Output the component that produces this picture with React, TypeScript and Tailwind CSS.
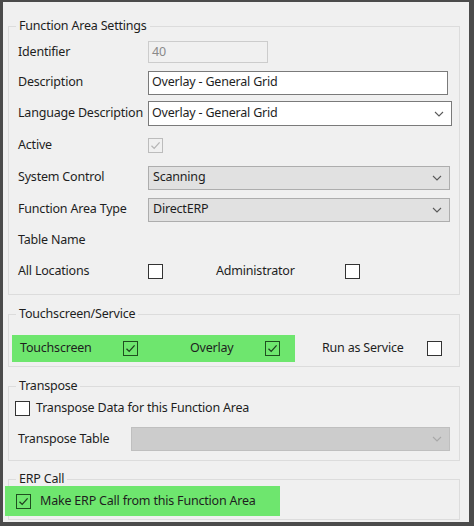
import type { ReactNode } from 'react';

function Check({ checked, disabled, green }: { checked?: boolean; disabled?: boolean; green?: boolean }) {
  const border = disabled ? 'border-[#bcbcbc]' : green ? 'border-[#1f4f1f]' : 'border-[#333333]';
  const bg = green ? 'bg-transparent' : disabled ? 'bg-[#f0f0f0]' : 'bg-white';
  return (
    <span className={`inline-flex h-[15px] w-[15px] shrink-0 items-center justify-center border ${border} ${bg}`}>
      {checked && (
        <svg viewBox="0 0 13 13" className="h-[13px] w-[13px]">
          <path
            d="M2.5 6.8 L5.2 9.4 L10.6 3.4"
            fill="none"
            stroke={disabled ? '#b5b5b5' : '#1f3f1f'}
            strokeWidth="1.3"
          />
        </svg>
      )}
    </span>
  );
}

function Chevron({ color = '#5a5a5a' }: { color?: string }) {
  return (
    <svg viewBox="0 0 10 6" className="h-[6px] w-[10px]">
      <path d="M1 1 L5 5 L9 1" fill="none" stroke={color} strokeWidth="1.1" />
    </svg>
  );
}

function Group({ title, className, children }: { title: string; className?: string; children: ReactNode }) {
  return (
    <fieldset className={`border border-[#dcdcdc] ${className ?? ''}`}>
      <legend className="ml-[7px] px-[3px] leading-[16px]">{title}</legend>
      {children}
    </fieldset>
  );
}

function Row({ label, h = 'h-[31px]', children }: { label: string; h?: string; children?: ReactNode }) {
  return (
    <div className={`flex ${h} items-center`}>
      <div className="w-[130px] shrink-0">{label}</div>
      {children}
    </div>
  );
}

export default function App() {
  return (
    <div className="h-[526px] w-[474px] bg-[#4b4b4b] pb-[4px] pl-[3px] pr-[5px] pt-[2px]">
      <div className="flex h-full flex-col bg-[#f0f0f0] pl-[5px] pr-[9px] text-[12.5px] tracking-[-0.2px] text-[#1e1e1e] font-['Noto_Sans',sans-serif]">
        <Group title="Function Area Settings" className="mt-[16px] h-[277px]">
          <div className="pl-[9px] pt-[3px]">
            <Row label="Identifier" h="h-[30px]">
              <div className="flex h-[22px] w-[120px] items-center border border-[#cccccc] bg-[#f0f0f0] px-[3px] text-[#8a8a8a]">40</div>
            </Row>
            <Row label="Description">
              <div className="flex h-[24px] w-[300px] items-center border border-[#7a7a7a] bg-white px-[3px]">Overlay - General Grid</div>
            </Row>
            <Row label="Language Description">
              <div className="flex h-[25px] w-[304px] items-center justify-between border border-[#7a7a7a] bg-white pl-[3px] pr-[7px]">
                <span>Overlay - General Grid</span>
                <Chevron />
              </div>
            </Row>
            <Row label="Active" h="h-[32px]">
              <Check checked disabled />
            </Row>
            <Row label="System Control" h="h-[33px]">
              <div className="flex h-[24px] w-[302px] items-center justify-between border border-[#adadad] bg-[#e1e1e1] pl-[4px] pr-[7px]">
                <span>Scanning</span>
                <Chevron />
              </div>
            </Row>
            <Row label="Function Area Type">
              <div className="flex h-[24px] w-[302px] items-center justify-between border border-[#adadad] bg-[#e1e1e1] pl-[4px] pr-[7px]">
                <span>DirectERP</span>
                <Chevron />
              </div>
            </Row>
            <Row label="Table Name" />
            <Row label="All Locations" h="h-[30px]">
              <Check />
              <span className="ml-[53px] w-[129px]">Administrator</span>
              <Check />
            </Row>
          </div>
        </Group>

        <Group title="Touchscreen/Service" className="mt-[11px] h-[61px]">
          <div className="flex items-center pt-[13px]">
            <div className="ml-[3px] flex h-[27px] w-[283px] items-center bg-[#6ee66e] pl-[8px]">
              <span className="w-[103px]">Touchscreen</span>
              <Check checked green />
              <span className="ml-[52px] w-[75px]">Overlay</span>
              <Check checked green />
            </div>
            <span className="ml-[27px] w-[105px]">Run as Service</span>
            <Check />
          </div>
        </Group>

        <Group title="Transpose" className="mt-[11px] h-[83px]">
          <div className="mt-[6px] flex h-[17px] items-center gap-[6px] pl-[6px]">
            <Check />
            <span>Transpose Data for this Function Area</span>
          </div>
          <div className="mt-[10px] flex items-center pl-[9px]">
            <span className="w-[113px]">Transpose Table</span>
            <div className="flex h-[24px] w-[319px] items-center justify-end border border-[#bfbfbf] bg-[#cccccc] pr-[7px]">
              <Chevron color="#a8a8a8" />
            </div>
          </div>
        </Group>

        <Group title="ERP Call" className="mt-[10px] h-[49px]">
          <div className="-ml-[4px] -mt-[1px] flex h-[30px] w-[275px] items-center bg-[#6ee66e] pl-[11px]">
            <Check checked green />
            <span className="ml-[9px]">Make ERP Call from this Function Area</span>
          </div>
        </Group>
      </div>
    </div>
  );
}
